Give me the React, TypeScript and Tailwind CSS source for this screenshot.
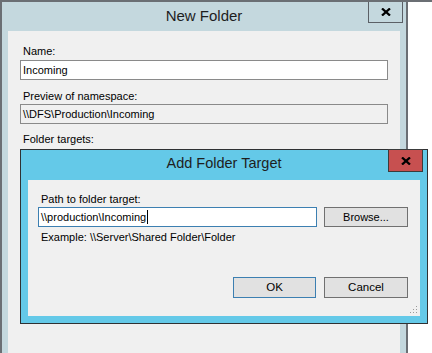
import React from "react";

const XIcon = () => (
  <svg width="10" height="8" viewBox="0 0 10 8">
    <path d="M1 0.5 L9 7.5 M9 0.5 L1 7.5" stroke="#000" strokeWidth="2.3" fill="none" />
  </svg>
);

const Grip = () => (
  <svg width="8" height="8" viewBox="0 0 8 8" className="absolute right-[2px] bottom-[2px]">
    <rect x="6" y="0" width="1" height="1" fill="#9a9a9a" />
    <rect x="3" y="3" width="1" height="1" fill="#9a9a9a" />
    <rect x="6" y="3" width="1" height="1" fill="#9a9a9a" />
    <rect x="0" y="6" width="1" height="1" fill="#9a9a9a" />
    <rect x="3" y="6" width="1" height="1" fill="#9a9a9a" />
    <rect x="6" y="6" width="1" height="1" fill="#9a9a9a" />
  </svg>
);

export default function App() {
  return (
    <div
      className="w-[432px] h-[353px] bg-white border-t-2 border-[#6b6f74] relative overflow-hidden text-black"
      style={{ fontFamily: '"Liberation Sans", Arial, sans-serif' }}
    >
      {/* Outer window */}
      <div className="w-[408px] h-full border-x-2 border-[#6b6f74] bg-[#c4d8de] flex flex-col relative">
        <div className="h-[29px] flex items-center justify-center text-[15px] text-[#1e1e1e]">
          New Folder
        </div>
        <div className="absolute left-[366px] top-[-2px] w-[35px] h-[23px] border border-[#5b6066] bg-[#c4d8de] flex items-center justify-center">
          <XIcon />
        </div>
        <div className="flex-1 mx-[6px] bg-[#f0f0f0] px-[12px] pt-[13px] text-[11px] flex flex-col">
          <div className="leading-[15px] pl-[3px]">Name:</div>
          <div className="mt-[1px] h-[20px] border border-[#8a8a8a] bg-white px-[2px] leading-[18px]">
            Incoming
          </div>
          <div className="mt-[9px] leading-[15px] pl-[3px]">Preview of namespace:</div>
          <div className="h-[20px] border border-[#8a8a8a] bg-[#f0f0f0] px-[2px] leading-[18px]">
            \\DFS\Production\Incoming
          </div>
          <div className="mt-[8px] leading-[15px] pl-[3px]">Folder targets:</div>
        </div>
      </div>

      {/* Add Folder Target dialog */}
      <div className="absolute left-[20px] top-[147px] w-[408px] h-[175px] border border-[#2f3133] bg-[#64c9e8] flex flex-col">
        <div className="h-[30px] flex items-center justify-center pb-[2px] text-[14.5px] text-[#1e1e1e]">
          Add Folder Target
        </div>
        <div className="absolute left-[367px] top-[-1px] w-[35px] h-[23px] border border-[#3b3b3b] bg-[#c75050] flex items-center justify-center">
          <XIcon />
        </div>
        <div className="flex-1 mx-[7px] mb-[7px] bg-[#f0f0f0] pl-[10px] pr-[12px] pt-[12px] pb-[18px] text-[11px] flex flex-col relative">
          <div className="leading-[15px] pl-[3px]">Path to folder target:</div>
          <div className="flex gap-[7px]">
            <div className="w-[279px] h-[20px] border border-[#3c7fb1] bg-white px-[2px] leading-[18px] flex items-center">
              <span>\\production\Incoming</span>
              <span className="inline-block w-[1px] h-[14px] bg-black ml-[1px]" />
            </div>
            <div className="w-[84px] h-[20px] border border-[#707070] bg-[#e1e1e1] flex items-center justify-center leading-[18px]">
              Browse...
            </div>
          </div>
          <div className="mt-[3px] leading-[15px] pl-[3px]">Example: \\Server\Shared Folder\Folder</div>
          <div className="flex-1" />
          <div className="flex justify-end gap-[8px]">
            <div className="w-[83px] h-[21px] border border-[#3c7fb1] bg-[#e1e1e1] flex items-center justify-center text-[11.5px]">
              OK
            </div>
            <div className="w-[84px] h-[21px] border border-[#707070] bg-[#e1e1e1] flex items-center justify-center text-[11.5px]">
              Cancel
            </div>
          </div>
          <Grip />
        </div>
      </div>
    </div>
  );
}
